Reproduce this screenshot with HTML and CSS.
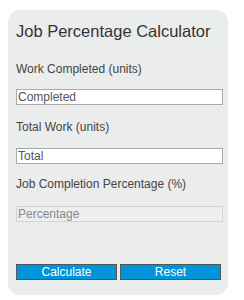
FILE: index.html
```html
<!DOCTYPE html>
<html>
<head>
<meta charset="utf-8">
<link rel="stylesheet" href="styles.css">
</head>
<body>
<div class="card">
  <h1 class="title">Job Percentage Calculator</h1>
  <label class="label l1">Work Completed (units)</label>
  <input class="field" type="text" placeholder="Completed">
  <label class="label l2">Total Work (units)</label>
  <input class="field" type="text" placeholder="Total">
  <label class="label l3">Job Completion Percentage (%)</label>
  <input class="field result" type="text" placeholder="Percentage" readonly>
  <div class="buttons">
    <button class="btn">Calculate</button>
    <button class="btn">Reset</button>
  </div>
</div>
</body>
</html>
```

FILE: styles.css
```css
html, body {
  margin: 0;
  padding: 0;
  background: #ffffff;
}
body {
  font-family: "Liberation Sans", Arial, sans-serif;
}
.card {
  box-sizing: border-box;
  margin: 10px 0 0 8px;
  width: 220px;
  height: 285px;
  background: #ebecec;
  border-radius: 12px;
  padding: 11px 5px 0 8px;
  display: flex;
  flex-direction: column;
}
.title {
  margin: 0;
  font-size: 16.5px;
  line-height: 20px;
  font-weight: normal;
  color: #333333;
}
.label {
  display: block;
  font-size: 12px;
  line-height: 15px;
  color: #444444;
}
.l1 { margin: 21px 0 12px; }
.l2 { margin: 15px 0 13px; }
.l3 { margin: 13px 0 14px; }
.field {
  box-sizing: border-box;
  width: 207px;
  height: 16px;
  margin: 0;
  padding: 0 1px;
  border: 1px solid #aaaaaa;
  background: #ffffff;
  font-family: "Liberation Sans", Arial, sans-serif;
  font-size: 12px;
  color: #333333;
  outline: none;
}
.field::placeholder {
  color: #555555;
}
.field.result {
  background: #eeeeee;
  border-color: #d4d4d4;
}
.field.result::placeholder {
  color: #888888;
}
.buttons {
  display: flex;
  gap: 3px;
  margin-top: 42px;
}
.btn {
  box-sizing: border-box;
  width: 101px;
  height: 16px;
  margin: 0;
  padding: 0;
  border: 1px solid #555555;
  background: #0094da;
  color: #ffffff;
  font-family: "Liberation Sans", Arial, sans-serif;
  font-size: 12px;
  line-height: 14px;
}
```
